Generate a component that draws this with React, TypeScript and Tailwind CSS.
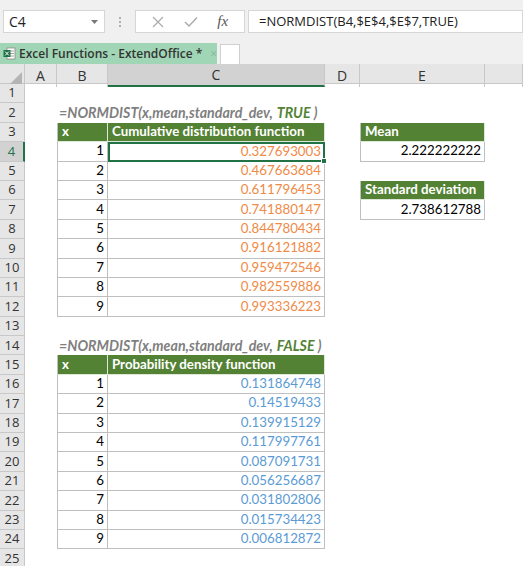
import React from "react";

const cdf = [
  "0.327693003",
  "0.467663684",
  "0.611796453",
  "0.741880147",
  "0.844780434",
  "0.916121882",
  "0.959472546",
  "0.982559886",
  "0.993336223",
];

const pdf = [
  "0.131864748",
  "0.14519433",
  "0.139915129",
  "0.117997761",
  "0.087091731",
  "0.056256687",
  "0.031802806",
  "0.015734423",
  "0.006812872",
];

const dataCell =
  "flex items-center justify-end pr-[3px] border-b border-r border-[#bfbfbf]";
const headCell =
  "flex items-center pl-[4px] bg-[#548235] text-white font-bold border-r border-b border-[#dfe8d8] whitespace-nowrap";

function ExcelIcon() {
  return (
    <svg width="13" height="13" viewBox="0 0 13 13" className="shrink-0">
      <rect x="4" y="1" width="8" height="11" fill="#fff" stroke="#8a8a8a" strokeWidth="0.8" />
      <line x1="7" y1="4" x2="11" y2="4" stroke="#8a8a8a" strokeWidth="0.8" />
      <line x1="7" y1="6.5" x2="11" y2="6.5" stroke="#8a8a8a" strokeWidth="0.8" />
      <line x1="7" y1="9" x2="11" y2="9" stroke="#8a8a8a" strokeWidth="0.8" />
      <rect x="0.5" y="3" width="7" height="7" fill="#1e7145" />
      <path d="M2.2 4.6 L5.8 8.4 M5.8 4.6 L2.2 8.4" stroke="#fff" strokeWidth="1" />
    </svg>
  );
}

function Toolbar() {
  return (
    <div className="h-[43px] bg-[#f0f0f0] flex items-center pl-[3px] font-['Open_Sans',sans-serif]">
      <div className="w-[102px] h-[23px] bg-white border border-[#d6d6d6] flex items-center justify-between pl-[5px] pr-[6px] text-[14px] text-[#222]">
        <span>C4</span>
        <svg width="7" height="4" viewBox="0 0 7 4">
          <path d="M0 0 L7 0 L3.5 4 Z" fill="#777" />
        </svg>
      </div>
      <div className="w-[30px] flex flex-col items-center gap-[2px]">
        <span className="w-[2px] h-[2px] bg-[#b0b0b0]" />
        <span className="w-[2px] h-[2px] bg-[#b0b0b0]" />
        <span className="w-[2px] h-[2px] bg-[#b0b0b0]" />
      </div>
      <div className="w-[110px] h-[23px] bg-white border border-[#d6d6d6] flex items-center justify-around px-[6px]">
        <svg width="12" height="12" viewBox="0 0 12 12">
          <path d="M1 1 L11 11 M11 1 L1 11" stroke="#a8a8a8" strokeWidth="1.1" />
        </svg>
        <svg width="14" height="12" viewBox="0 0 14 12">
          <path d="M1 6 L5 10 L13 1.5" stroke="#a8a8a8" strokeWidth="1.3" fill="none" />
        </svg>
        <span className="font-['Liberation_Serif',serif] italic text-[15px] text-[#555] leading-none">
          fx
        </span>
      </div>
      <div className="ml-[3px] flex-1 h-[23px] bg-white border border-[#d6d6d6] flex items-center pl-[10px] text-[13px] text-[#222] whitespace-nowrap">
        =NORMDIST(B4,$E$4,$E$7,TRUE)
      </div>
    </div>
  );
}

function TabBar() {
  return (
    <div className="h-[21px] bg-[#f0f0f0] flex items-end font-['Open_Sans',sans-serif]">
      <div className="w-[217px] h-[21px] bg-[#a0d6b5] flex items-center pl-[3px] gap-[3px] overflow-hidden">
        <ExcelIcon />
        <span className="text-[12px] font-semibold text-[#333] whitespace-nowrap">
          Excel Functions - ExtendOffice *
        </span>
        <span className="ml-[5px] text-[12px] text-[#86b698]">×</span>
      </div>
      <div className="ml-[3px] w-[20px] h-[20px] bg-white border border-[#d0d0d0] border-b-0" />
    </div>
  );
}

function ColumnHeaders() {
  const cols = [
    { l: "A", sel: false },
    { l: "B", sel: false },
    { l: "C", sel: true },
    { l: "D", sel: false },
    { l: "E", sel: false },
    { l: "", sel: false },
  ];
  return (
    <div className="grid grid-cols-[25px_32px_51px_217px_35px_125px_1fr] h-[20px] bg-[#e6e6e6] border-b border-[#c8c8c8] text-[14px] text-[#333] font-['Open_Sans',sans-serif]">
      <div className="flex items-end justify-end pr-[2px] pb-[2px] border-r border-[#c8c8c8]">
        <svg width="13" height="13" viewBox="0 0 13 13">
          <path d="M13 0 L13 13 L0 13 Z" fill="#b4b4b4" />
        </svg>
      </div>
      {cols.map((c, i) =>
        c.sel ? (
          <div
            key={i}
            className="flex items-center justify-center bg-[#d2d2d2] border-b-2 border-[#217346] border-r border-r-[#c8c8c8]"
          >
            {c.l}
          </div>
        ) : (
          <div key={i} className="flex items-center justify-center border-r border-[#c8c8c8]">
            {c.l}
          </div>
        )
      )}
    </div>
  );
}

function RowHead({ n }: { n: number }) {
  if (n === 4) {
    return (
      <div className="flex items-center justify-center bg-[#d2d2d2] border-b border-[#c8c8c8] border-r-2 border-r-[#217346] text-[#217346] text-[13px] font-['Open_Sans',sans-serif]">
        {n}
      </div>
    );
  }
  return (
    <div className="flex items-center justify-center bg-[#e6e6e6] border-b border-r border-[#c8c8c8] text-[#333] text-[13px] font-['Open_Sans',sans-serif]">
      {n}
    </div>
  );
}

function Formula({ flag }: { flag: string }) {
  return (
    <div className="flex items-center pl-[2px] whitespace-nowrap overflow-visible italic font-bold text-[14.2px] text-[#7f7f7f] relative z-10">
      =NORMDIST(x,mean,standard_dev, <span className="text-[#548235] ml-[4px]">{flag}</span>&nbsp;)
    </div>
  );
}

function CellB({ r }: { r: number }) {
  if (r === 2) return <Formula flag="TRUE" />;
  if (r === 14) return <Formula flag="FALSE" />;
  if (r === 3 || r === 15) return <div className={headCell + " border-l-[#bfbfbf] border-l"}>x</div>;
  if (r >= 4 && r <= 12) return <div className={dataCell + " border-l text-black"}>{r - 3}</div>;
  if (r >= 16 && r <= 24) return <div className={dataCell + " border-l text-black"}>{r - 15}</div>;
  return <div />;
}

function CellC({ r }: { r: number }) {
  if (r === 3) return <div className={headCell}>Cumulative distribution function</div>;
  if (r === 15) return <div className={headCell}>Probability density function</div>;
  if (r === 4)
    return (
      <div className="relative flex items-center justify-end pr-[2px] border-2 border-[#217346] text-[#f08a46]">
        {cdf[0]}
        <span className="absolute right-[-4px] bottom-[-4px] w-[6px] h-[6px] bg-[#217346] border border-white" />
      </div>
    );
  if (r >= 5 && r <= 12)
    return <div className={dataCell + " text-[#f08a46]"}>{cdf[r - 4]}</div>;
  if (r >= 16 && r <= 24)
    return <div className={dataCell + " text-[#5b9bd5]"}>{pdf[r - 16]}</div>;
  return <div />;
}

function CellE({ r }: { r: number }) {
  if (r === 3) return <div className={headCell + " border-l border-l-[#bfbfbf]"}>Mean</div>;
  if (r === 6)
    return <div className={headCell + " border-l border-l-[#bfbfbf]"}>Standard deviation</div>;
  if (r === 4) return <div className={dataCell + " border-l text-black"}>2.222222222</div>;
  if (r === 7) return <div className={dataCell + " border-l text-black"}>2.738612788</div>;
  return <div />;
}

function Sheet() {
  const rows = Array.from({ length: 25 }, (_, i) => i + 1);
  return (
    <div className="grid grid-cols-[25px_32px_51px_217px_35px_125px_1fr] auto-rows-[19.4px] text-[13.3px] font-['Lato',sans-serif] bg-white">
      {rows.map((r) => (
        <React.Fragment key={r}>
          <RowHead n={r} />
          <div />
          <CellB r={r} />
          <CellC r={r} />
          <div />
          <CellE r={r} />
          <div />
        </React.Fragment>
      ))}
    </div>
  );
}

export default function App() {
  return (
    <div className="w-[523px] h-[566px] overflow-hidden bg-white">
      <Toolbar />
      <TabBar />
      <ColumnHeaders />
      <Sheet />
    </div>
  );
}
